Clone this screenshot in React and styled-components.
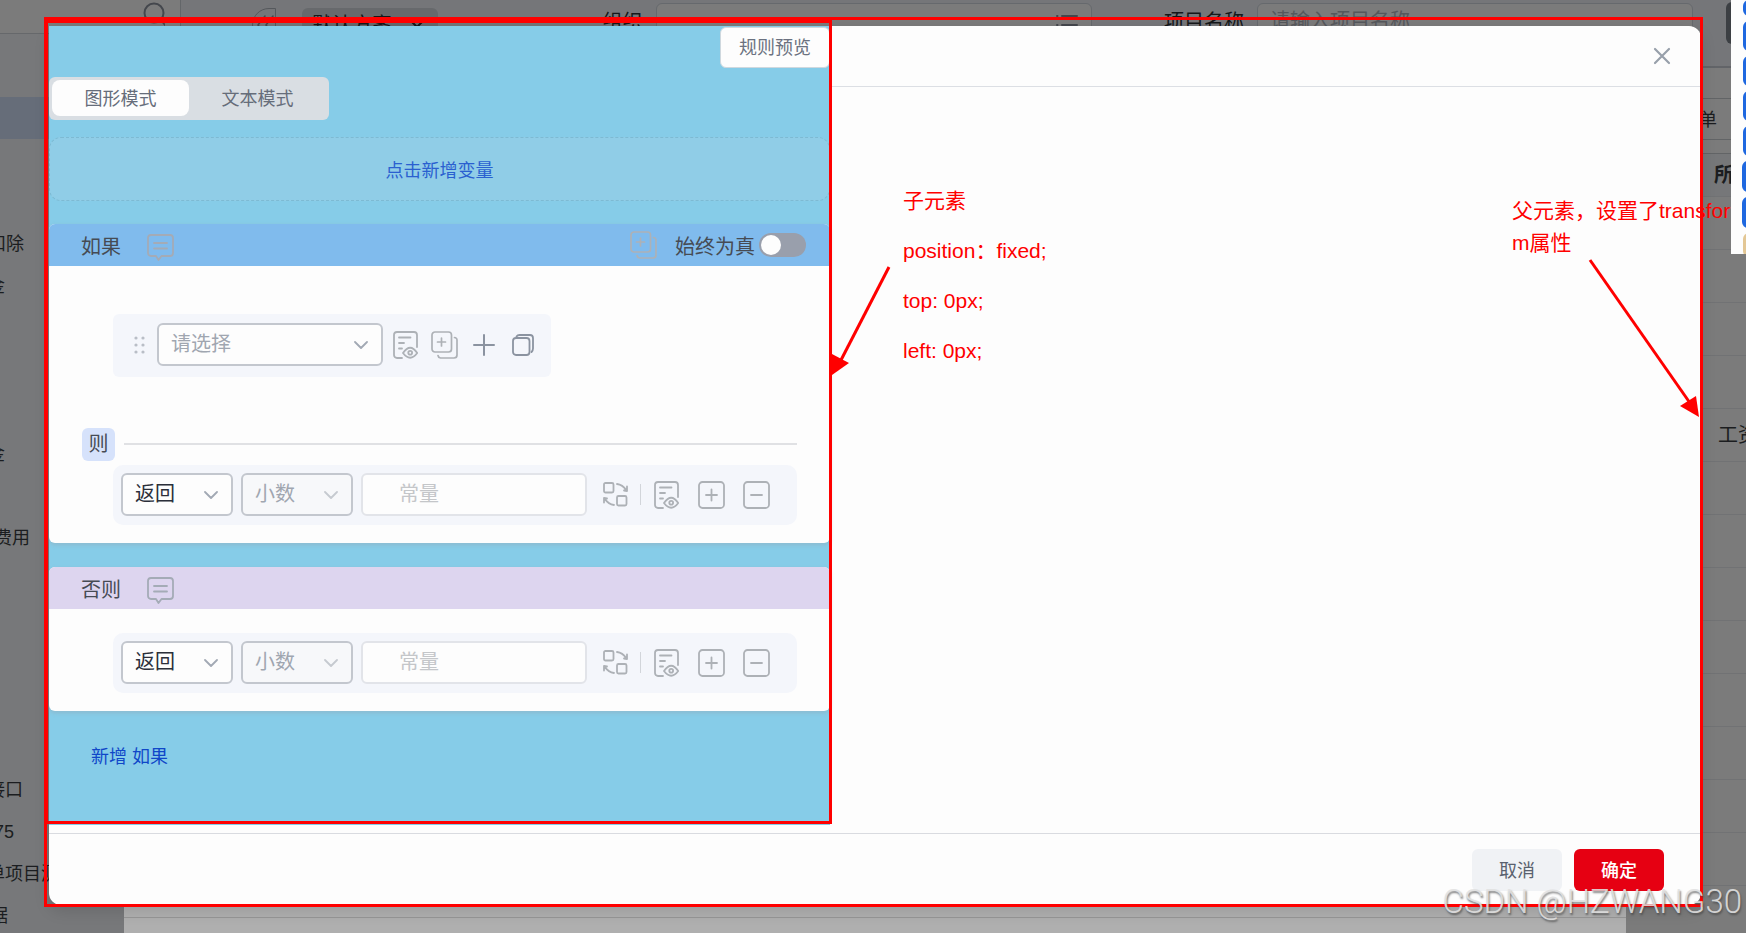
import React from "react";
import styled, { createGlobalStyle } from "styled-components";

const GlobalStyle = createGlobalStyle`
  * { box-sizing: border-box; }
  body {
    margin: 0;
    font-family: "Liberation Sans", "Noto Sans CJK SC", sans-serif;
    background: #7b7b7b;
    overflow: hidden;
  }
  button, input, select { font-family: inherit; margin: 0; }
  button { cursor: pointer; }
`;

/* ---------- dimmed page behind the dialog ---------- */

const Page = styled.div`
  position: relative;
  display: flex;
  height: 100vh;
  overflow: hidden;
  color: #1b1d20;
`;

const Sidebar = styled.aside`
  width: 181px;
  flex: none;
  border-right: 1px solid #636669;
  background: #77787a;
`;

const SearchBar = styled.div`
  height: 34px;
  padding: 2px 15px;
  display: flex;
  justify-content: flex-end;
  border-bottom: 1px solid #66686b;
  background: #7b7b7b;
  color: #44474d;
`;

const Tree = styled.ul`
  list-style: none;
  margin: 0;
  padding: 63px 0 0;
`;

const TreeItem = styled.li`
  height: 42px;
  background: ${(p) => (p.$active ? "#666d79" : "transparent")};
`;

const TreeLabel = styled.span`
  display: flex;
  justify-content: flex-end;
  width: ${(p) => p.$end}px;
  line-height: 42px;
  font-size: 18px;
  white-space: nowrap;
`;

const Main = styled.main`
  flex: 1;
  min-width: 0;
  display: flex;
  flex-direction: column;
`;

const FilterBar = styled.div`
  height: 68px;
  flex: none;
  display: flex;
  align-items: flex-start;
  background: #757679;
  border-bottom: 2px solid #626468;
  font-size: 20px;
`;

const CollapseTab = styled.div`
  width: 24px;
  height: 34px;
  margin: 8px 26px 0 71px;
  border: 1px solid #55585c;
  border-radius: 18px 0 0 18px;
  padding: 6px 3px;
  color: #45484d;
`;

const Scheme = styled.button`
  width: 136px;
  height: 32px;
  margin: 8px 0 0;
  padding: 0 12px 2px 10px;
  display: flex;
  align-items: center;
  justify-content: space-between;
  border: 0;
  border-radius: 6px;
  background: #67696c;
  color: #151719;
  font-size: 20px;
`;

const FilterField = styled.label`
  flex: ${(p) => p.$grow} 1 0;
  display: flex;
  justify-content: flex-end;
  gap: 13px;
  line-height: 44px;
  color: #16181a;
`;

const FilterInput = styled.div`
  position: relative;
  width: 436px;
  height: 41px;
  margin-top: 3px;
  color: #44474d;
  input {
    display: block;
    width: 100%;
    height: 100%;
    padding: 0 12px 4px;
    font-size: 20px;
    border: 1px solid #66696d;
    border-radius: 6px;
    background: #7b7b7b;
  }
  input::placeholder { color: #56585c; opacity: 1; }
  svg { position: absolute; right: 13px; top: 10px; }
`;

const QueryButton = styled.button`
  width: 80px;
  height: 42px;
  margin: 2px -60px 0 33px;
  flex: none;
  border: 0;
  border-radius: 6px;
  background: #3c3f43;
`;

const TableTools = styled.div`
  flex: none;
  height: 85px;
  padding: 30px 0 0;
  display: flex;
  justify-content: flex-end;
  align-items: flex-start;
  font-size: 18px;
  span {
    width: 60px;
    text-align: right;
    height: 42px;
    line-height: 42px;
    border: 1px solid #626466;
    border-width: 1px 0;
    padding-right: 29px;
  }
`;

const DataTable = styled.table`
  flex: none;
  width: 100%;
  border-collapse: collapse;
  border-top: 1px solid #626466;
  font-size: 20px;
  th, td {
    height: 53px;
    padding: 0 0 4px;
    text-align: right;
    border-bottom: 1px solid #717274;
    font-weight: 400;
  }
  th { height: 43px; padding-right: 12px; font-weight: 700; background: #767779; }
  td span { display: inline-block; width: 28px; white-space: nowrap; text-align: left; }
`;

const ScrollStrip = styled.div`
  position: absolute;
  left: 124px;
  right: 120px;
  bottom: 0;
  height: 26px;
  background: #afafaf;
  &::after {
    content: "";
    display: block;
    margin-top: 10px;
    border-top: 1px solid #969696;
  }
`;

const SideDock = styled.nav`
  position: absolute;
  z-index: 4;
  top: 0;
  right: 0;
  width: 15px;
  height: 254px;
  overflow: hidden;
  background: #fdfdfd;
  display: flex;
  flex-direction: column;
  gap: 5px;
`;

const DockButton = styled.button`
  width: 30px;
  height: ${(p) => p.$h}px;
  flex: none;
  margin-left: ${(p) => (p.$wide ? 11 : 12)}px;
  padding: 0;
  border: 0;
  border-radius: 6px;
  background: ${(p) => (p.$plain ? "#e3c795" : "#1f68e0")};
`;

/* ---------- dialog ---------- */

const Dialog = styled.section`
  position: absolute;
  z-index: 2;
  inset: 26px 45px 28px 49px;
  display: flex;
  flex-direction: column;
  background: #fdfdfd;
  border-radius: 12px;
  box-shadow: 0 6px 16px rgba(0, 0, 0, 0.12);
`;

const DialogHeader = styled.header`
  height: 61px;
  flex: none;
  padding: 0 28px;
  display: flex;
  align-items: center;
  justify-content: flex-end;
  border-bottom: 1px solid #dcdfe4;
`;

const CloseButton = styled.button`
  display: flex;
  padding: 2px;
  border: 0;
  background: none;
  color: #98a0ab;
`;

const DialogBody = styled.div`
  flex: 1;
`;

const DialogFooter = styled.footer`
  height: 72px;
  flex: none;
  padding: 15px 37px 0;
  display: flex;
  justify-content: flex-end;
  align-items: flex-start;
  gap: 12px;
  border-top: 1px solid #d9dbe0;
`;

const FooterButton = styled.button`
  width: 90px;
  height: 42px;
  padding: 0 0 3px;
  border: 0;
  border-radius: 6px;
  font-size: 18px;
  font-weight: ${(p) => (p.$primary ? 500 : 400)};
  color: ${(p) => (p.$primary ? "#ffffff" : "#59616e")};
  background: ${(p) => (p.$primary ? "#e60012" : "#f0f2f5")};
`;

const RedFrame = styled.div`
  position: absolute;
  z-index: ${(p) => p.$z};
  inset: ${(p) => p.$inset};
  border: 3px solid #ff0000;
  pointer-events: none;
`;

/* ---------- rule panel ---------- */

const RulePanel = styled.div`
  position: absolute;
  top: 0;
  left: 0;
  bottom: 80px;
  width: calc(50% - 45px);
  display: flex;
  flex-direction: column;
  background: #86cce8;
`;

const PreviewButton = styled.button`
  align-self: flex-end;
  width: 110px;
  height: 41px;
  margin-top: 1px;
  padding: 0 0 3px;
  border: 1px solid #cfd8de;
  border-radius: 6px;
  background: #fdfdfd;
  color: #6b7280;
  font-size: 18px;
`;

const ModeTabs = styled.div`
  display: flex;
  align-self: flex-start;
  width: 280px;
  height: 43px;
  margin-top: 9px;
  padding: 3px;
  border-radius: 6px;
  background: #d9dee3;
`;

const ModeTab = styled.button`
  flex: 1;
  height: 36px;
  padding: 0 0 2px;
  border: 0;
  border-radius: 8px;
  background: ${(p) => (p.$active ? "#fdfdfd" : "transparent")};
  color: #666d7a;
  font-size: 18px;
`;

const AddVariable = styled.button`
  height: 64px;
  margin-top: 17px;
  border: 1px dashed #7dbad3;
  border-radius: 12px;
  background: #90cde7;
  color: #2a60d0;
  font-size: 18px;
`;

const Card = styled.section`
  margin-top: ${(p) => p.$gap}px;
  border-radius: 6px;
  background: #fdfdfd;
  box-shadow: 0 2px 4px rgba(150, 160, 170, 0.4);
  overflow: hidden;
`;

const CardHeader = styled.div`
  height: 42px;
  padding: 0 24px 0 32px;
  display: flex;
  align-items: center;
  background: ${(p) => p.$bg};
  color: #464b54;
  font-size: 20px;
`;

const CardBody = styled.div`
  padding: ${(p) => p.$top}px 33px 18px;
`;

const CommentButton = styled.button`
  display: flex;
  margin: 4px auto 0 26px;
  padding: 0;
  border: 0;
  background: none;
  color: #a4abb6;
`;

const IconButton = styled.button`
  display: flex;
  align-items: center;
  justify-content: center;
  width: 27px;
  height: 28px;
  flex: none;
  padding: 0;
  border: 0;
  background: none;
  color: ${(p) => (p.$dark ? "#8b93a0" : "#adb1b6")};
`;

const AlwaysTrue = styled.label`
  display: flex;
  align-items: center;
  gap: 4px;
  margin-left: 18px;
`;

const Switch = styled.input`
  appearance: none;
  width: 47px;
  height: 24px;
  margin: 0;
  border-radius: 12px;
  background: #999fac;
  &::before {
    content: "";
    display: block;
    width: 20px;
    height: 20px;
    margin: 2px;
    border-radius: 50%;
    background: #fdfdfd;
  }
`;

const Condition = styled.div`
  width: 438px;
  height: 63px;
  margin-left: 31px;
  padding: 0 15px 2px 21px;
  display: flex;
  align-items: center;
  border-radius: 6px;
  background: #f4f6fb;
`;

const DragHandle = styled.span`
  display: flex;
  flex: none;
  width: 23px;
  color: #b9bec6;
`;

const IconRow = styled.div`
  display: flex;
  align-items: center;
  gap: ${(p) => p.$gap}px;
  margin-left: ${(p) => p.$start}px;
`;

const SelectBox = styled.div`
  position: relative;
  width: ${(p) => p.$w}px;
  height: 43px;
  flex: none;
  color: ${(p) => (p.$muted ? "#c6cad0" : "#a2a9b4")};
  select {
    display: block;
    appearance: none;
    width: 100%;
    height: 100%;
    padding: 0 12px 1px;
    border: 2px solid #c3c7ce;
    border-radius: 6px;
    background: ${(p) => (p.$muted ? "#f7f8fa" : "#fdfdfd")};
    color: ${(p) => p.$color};
    font-size: 20px;
    opacity: 1;
  }
  svg { position: absolute; right: 15px; top: 18px; pointer-events: none; }
`;

const ConstantInput = styled.input`
  width: 226px;
  height: 43px;
  flex: none;
  padding: 0 36px 1px;
  border: 2px solid #e2e4e9;
  border-radius: 6px;
  background: #fdfdfd;
  font-size: 20px;
  &::placeholder { color: #c4c6c9; opacity: 1; }
`;

const ThenRow = styled.div`
  display: flex;
  align-items: center;
  gap: 9px;
  margin-top: 51px;
  &::after {
    content: "";
    flex: 1;
    height: 2px;
    margin-bottom: 2px;
    background: #e0e1e4;
  }
`;

const ThenTag = styled.span`
  width: 33px;
  height: 33px;
  line-height: 33px;
  border-radius: 6px;
  background: #d6e2fb;
  color: #464b54;
  font-size: 20px;
  text-align: center;
`;

const ActionRowBox = styled.div`
  height: 60px;
  margin: ${(p) => p.$gap}px 0 0 31px;
  padding: 0 8px 1px;
  display: flex;
  align-items: center;
  gap: 8px;
  border-radius: 10px;
  background: #f4f6fb;
`;

const Divider = styled.i`
  width: 1px;
  height: 21px;
  margin: 0 12px 0 11px;
  background: #d2d5da;
`;

const AddIfLink = styled.a`
  align-self: flex-start;
  margin: 32px 0 0 42px;
  line-height: 28px;
  color: #1047c8;
  font-size: 18px;
  text-decoration: none;
`;

/* ---------- notes drawn over everything ---------- */

const Note = styled.div`
  position: absolute;
  z-index: 3;
  top: ${(p) => p.$top}px;
  left: ${(p) => p.$left}px;
  width: ${(p) => p.$w}px;
  line-height: ${(p) => p.$line}px;
  color: #ff0000;
  font-size: 21px;
  word-break: break-all;
  p { margin: 0; }
`;

const Arrows = styled.svg`
  position: absolute;
  z-index: 3;
  inset: 0;
  pointer-events: none;
`;

const Watermark = styled.div`
  position: absolute;
  z-index: 5;
  right: 4px;
  bottom: 11px;
  line-height: 40px;
  font-family: Roboto, "Liberation Sans", sans-serif;
  font-weight: 300;
  font-size: 33px;
  white-space: nowrap;
  color: rgba(226, 226, 226, 0.9);
  text-shadow: 1px 2px 2px rgba(70, 70, 70, 0.75);
`;

/* ---------- icons ---------- */

const Svg = ({ w, h, sw = 2, children }) => (
  <svg width={w} height={h} viewBox={`0 0 ${w} ${h}`} fill="none" stroke="currentColor"
    strokeWidth={sw} strokeLinecap="round" strokeLinejoin="round" aria-hidden="true">
    {children}
  </svg>
);

const Chevron = () => <Svg w={14} h={8} sw={1.8}><path d="M1 1l6 6 6-6" /></Svg>;

const CommentIcon = () => (
  <Svg w={27} h={27} sw={1.8}>
    <path d="M4 1h19a3 3 0 0 1 3 3v15a3 3 0 0 1-3 3h-8.500l-3 4-2.500-4H4a3 3 0 0 1-3-3V4a3 3 0 0 1 3-3zM7 9h13M7 14.500h13" />
  </Svg>
);

const PreviewIcon = () => (
  <Svg w={25} h={28} sw={1.8}>
    <path d="M9 27H4a3 3 0 0 1-3-3V4a3 3 0 0 1 3-3h17a3 3 0 0 1 3 3v12M6 6.500h11.500M6 12h5M6 17.500h3" />
    <path d="M10 22q7.200-10.500 14.200 0q-7 9.500-14.200 0z" />
    <circle cx="17.200" cy="21.800" r="1.900" />
  </Svg>
);

const CopyPlusIcon = () => (
  <Svg w={27} h={28} sw={1.7}>
    <rect x="1" y="1" width="19.500" height="20" rx="3" />
    <path d="M10.500 7v8M6.500 11h8M23.500 6.500a2.500 2.500 0 0 1 2.500 2.500v15a3 3 0 0 1-3 3H9.500a3 3 0 0 1-2.500-2.500" />
  </Svg>
);

const PlusIcon = () => <Svg w={22} h={22}><path d="M11 1v20M1 11h20" /></Svg>;

const CopyIcon = () => (
  <Svg w={22} h={22} sw={1.8}>
    <rect x="1" y="4" width="16.500" height="17" rx="3" />
    <path d="M4.500 2.500Q5.500 1 7.500 1H18q3 0 3 3v10.500q0 2-1.500 3.500" />
  </Svg>
);

const SwapIcon = () => (
  <Svg w={25} h={25} sw={1.8}>
    <rect x="1" y="1" width="9.500" height="9.500" rx="1.500" />
    <rect x="14" y="14" width="9.500" height="9.500" rx="1.500" />
    <path d="M14 2q5.500.5 9.500 6.500M24 4.500v4.500l-3-.5M11 23q-5.500-.5-9.500-6.500M1 20.500v-4.500l3 .5" />
  </Svg>
);

const BoxIcon = ({ plus }) => (
  <Svg w={27} h={28} sw={1.8}>
    <rect x="1" y="1" width="25" height="26" rx="3.500" />
    <path d={plus ? "M13.500 8.500v11M8 14h11" : "M8 14h11"} />
  </Svg>
);

const DotsIcon = () => (
  <svg width="12" height="18" viewBox="0 0 12 18" fill="currentColor" aria-hidden="true">
    {[2, 9, 16].map((y) => (
      <React.Fragment key={y}>
        <circle cx="2" cy={y} r="1.600" />
        <circle cx="9" cy={y} r="1.600" />
      </React.Fragment>
    ))}
  </svg>
);

const Dropdown = ({ label, value, w, color, muted }) => (
  <SelectBox $w={w} $color={color} $muted={muted}>
    <select aria-label={label} defaultValue={value} disabled={muted}>
      <option>{value}</option>
    </select>
    <Chevron />
  </SelectBox>
);

const ActionRow = ({ gap }) => (
  <ActionRowBox $gap={gap}>
    <Dropdown label="动作" value="返回" w={112} color="#2b2f3a" />
    <Dropdown label="类型" value="小数" w={112} color="#a0a6b0" muted />
    <ConstantInput aria-label="常量" placeholder="常量" />
    <IconRow $gap={0} $start={7}>
      <IconButton aria-label="切换"><SwapIcon /></IconButton>
      <Divider />
      <IconRow $gap={18} $start={0}>
        <IconButton aria-label="预览"><PreviewIcon /></IconButton>
        <IconButton aria-label="增加"><BoxIcon plus /></IconButton>
        <IconButton aria-label="删除"><BoxIcon /></IconButton>
      </IconRow>
    </IconRow>
  </ActionRowBox>
);

const treeItems = [
  { active: true }, {}, {}, { text: "扣除", end: 24 }, { text: "金", end: 5 }, {}, {}, {},
  { text: "金", end: 5 }, {}, { text: "费用", end: 30 }, {}, {}, {}, {}, {},
  { text: "接口", end: 23 }, { text: "75", end: 14 }, { text: "单项目测", end: 59 }, { text: "据", end: 8 },
];

const dock = [
  { h: 16 }, { h: 30 }, { h: 30 }, { h: 30 }, { h: 30 },
  { h: 31, wide: true }, { h: 31, wide: true }, { h: 24, plain: true },
];

const tableRows = ["", "", "", "", "工资", "", "", "", "", "", "", "", "", ""];

export default function App() {
  return (
    <>
      <GlobalStyle />
      <Page>
        <Sidebar>
          <SearchBar>
            <Svg w={22} h={24}><circle cx="11" cy="11" r="9.500" /><path d="M18 18l4 5" /></Svg>
          </SearchBar>
          <Tree>
            {treeItems.map((item, i) => (
              <TreeItem key={i} $active={item.active}>
                {item.text && <TreeLabel $end={item.end}>{item.text}</TreeLabel>}
              </TreeItem>
            ))}
          </Tree>
        </Sidebar>
        <Main>
          <FilterBar>
            <CollapseTab>
              <Svg w={18} h={20} sw={1.500}><path d="M9 1l-7 9 7 9M17 1l-7 9 7 9" /></Svg>
            </CollapseTab>
            <Scheme>默认方案<Svg w={18} h={10}><path d="M1 1l8 8 8-8" /></Svg></Scheme>
            <FilterField $grow={653}>
              组织
              <FilterInput>
                <input />
                <Svg w={24} h={16}><path d="M2 3h.5M2 12h.5M7 3h15M7 12h15" /></Svg>
              </FilterInput>
            </FilterField>
            <FilterField $grow={601}>
              项目名称
              <FilterInput><input placeholder="请输入项目名称" /></FilterInput>
            </FilterField>
            <QueryButton aria-label="查询" />
          </FilterBar>
          <TableTools><span>单</span></TableTools>
          <DataTable>
            <thead><tr><th>所</th></tr></thead>
            <tbody>
              {tableRows.map((text, i) => (
                <tr key={i}><td>{text && <span>{text}</span>}</td></tr>
              ))}
            </tbody>
          </DataTable>
        </Main>
        <ScrollStrip />
        <SideDock>
          {dock.map((b, i) => (
            <DockButton key={i} $h={b.h} $wide={b.wide} $plain={b.plain} aria-label={`工具 ${i + 1}`} />
          ))}
        </SideDock>

        <Dialog role="dialog">
          <DialogHeader>
            <CloseButton aria-label="关闭">
              <Svg w={18} h={18} sw={2.200}><path d="M2 2l14 14M16 2L2 16" /></Svg>
            </CloseButton>
          </DialogHeader>
          <DialogBody />
          <DialogFooter>
            <FooterButton>取消</FooterButton>
            <FooterButton $primary>确定</FooterButton>
          </DialogFooter>

          <RulePanel>
            <PreviewButton>规则预览</PreviewButton>
            <ModeTabs>
              <ModeTab $active>图形模式</ModeTab>
              <ModeTab>文本模式</ModeTab>
            </ModeTabs>
            <AddVariable>点击新增变量</AddVariable>

            <Card $gap={23}>
              <CardHeader $bg="#80bbed">
                如果
                <CommentButton aria-label="备注"><CommentIcon /></CommentButton>
                <IconButton aria-label="复制"><CopyPlusIcon /></IconButton>
                <AlwaysTrue>始终为真<Switch type="checkbox" role="switch" /></AlwaysTrue>
              </CardHeader>
              <CardBody $top={48}>
                <Condition>
                  <DragHandle><DotsIcon /></DragHandle>
                  <Dropdown label="条件" value="请选择" w={226} color="#a0a6b0" />
                  <IconRow $gap={12} $start={9}>
                    <IconButton aria-label="预览"><PreviewIcon /></IconButton>
                    <IconButton aria-label="复制新增"><CopyPlusIcon /></IconButton>
                    <IconButton $dark aria-label="新增"><PlusIcon /></IconButton>
                    <IconButton $dark aria-label="复制"><CopyIcon /></IconButton>
                  </IconRow>
                </Condition>
                <ThenRow><ThenTag>则</ThenTag></ThenRow>
                <ActionRow gap={4} />
              </CardBody>
            </Card>

            <Card $gap={24}>
              <CardHeader $bg="#ddd5ef">
                否则
                <CommentButton aria-label="备注"><CommentIcon /></CommentButton>
              </CardHeader>
              <CardBody $top={24}>
                <ActionRow gap={0} />
              </CardBody>
            </Card>

            <AddIfLink href="#add">新增 如果</AddIfLink>
            <RedFrame $z={1} $inset="-6px -2px 1px -4px" />
          </RulePanel>
          <RedFrame $z={2} $inset="-9px -2px -2px -5px" />
        </Dialog>

        <Note $top={176} $left={903} $w={200} $line={50}>
          <p>子元素</p>
          <p>position：fixed;</p>
          <p>top: 0px;</p>
          <p>left: 0px;</p>
        </Note>
        <Note $top={195} $left={1512} $w={221} $line={32}>
          父元素，设置了transform属性
        </Note>
        <Arrows width="100%" height="100%" fill="#ff0000" stroke="#ff0000" aria-hidden="true">
          <path d="M889 267L840 362" strokeWidth="3" />
          <path d="M832 354L849 363L832 375z" stroke="none" />
          <path d="M1590 260L1690 403" strokeWidth="3" />
          <path d="M1680 406L1696 396L1699 417z" stroke="none" />
        </Arrows>
        <Watermark>CSDN @HZWANG30</Watermark>
      </Page>
    </>
  );
}
